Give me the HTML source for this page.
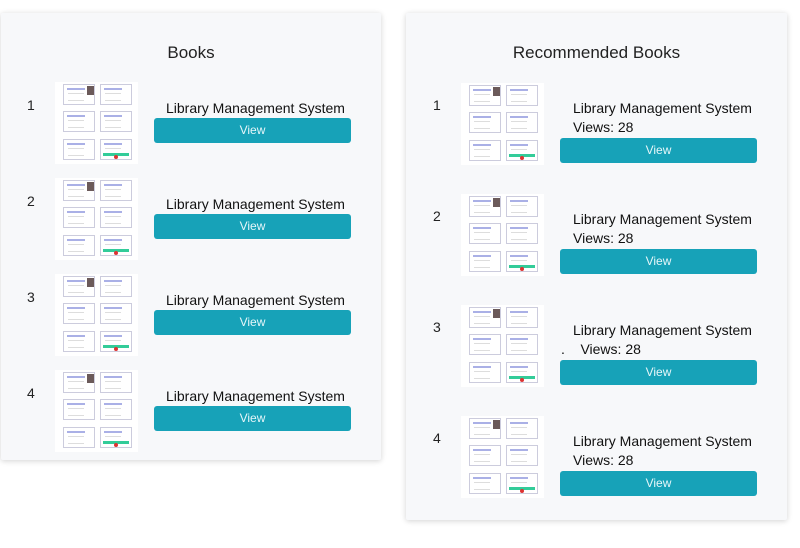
<!DOCTYPE html>
<html><head><meta charset="utf-8"><style>
body{margin:0;width:800px;height:548px;background:#fff;font-family:"Liberation Sans",Arial,sans-serif;position:relative;overflow:hidden;color:#222}
.card{position:absolute;background:#f7f8fa;box-shadow:0 1px 6px rgba(0,0,0,.18);border-radius:2px}
.h{position:absolute;left:0;right:0;text-align:center;font-size:17px;top:30px;color:#222}
.it{position:absolute;left:0;width:100%}
.n{position:absolute;font-size:14px}
.th{position:absolute;width:83px;height:82px;background:#fff}
.s{position:absolute;width:32px;height:21px;border:1px solid #ccd;background:#fff;box-sizing:border-box}
.s:before{content:"";position:absolute;left:3px;top:3px;width:18px;height:2px;background:#aab0e6}
.s:after{content:"";position:absolute;left:4px;top:8px;width:16px;height:6px;border-top:1px solid #ddd;border-bottom:1px solid #ddd}
.t{position:absolute;font-size:14px;white-space:nowrap;color:#111}
.b{position:absolute;width:197px;height:25px;background:#17a2b8;border-radius:3px;color:#e6f6f9;font-size:12px;text-align:center;line-height:25px}
</style></head><body>

<div class="card" style="left:1px;top:13px;width:380px;height:447px">
<div class="h">Books</div>
</div>
<div class="card" style="left:406px;top:13px;width:381px;height:507px">
<div class="h">Recommended Books</div>
</div>

<!-- left items -->
<div id="L"></div>
<div id="R"></div>
<script>
function thumb(x,y){var h='<div class="th" style="left:'+x+'px;top:'+y+'px">';
var cx=[8,45],cy=[2,29,57];
for(var r=0;r<3;r++)for(var c=0;c<2;c++){h+='<div class="s" style="left:'+cx[c]+'px;top:'+cy[r]+'px"></div>';}
h+='<div style="position:absolute;left:32px;top:4px;width:7px;height:9px;background:#6b5a5a"></div>';
h+='<div style="position:absolute;left:48px;top:71px;width:26px;height:3px;background:#3c9"></div>';
h+='<div style="position:absolute;left:59px;top:73px;width:4px;height:4px;background:#d33;border-radius:2px"></div>';
return h+'</div>';}
var L='';
for(var i=0;i<4;i++){var y=82+i*96;
L+='<div class="n" style="left:27px;top:'+(y+15)+'px">'+(i+1)+'</div>'+thumb(55,y)+
'<div class="t" style="left:166px;top:'+(y+18)+'px">Library Management System</div>'+
'<div class="b" style="left:154px;top:'+(y+36)+'px">View</div>';}
document.getElementById('L').innerHTML=L;
var R='';
for(var i=0;i<4;i++){var y=83+i*111;
R+='<div class="n" style="left:433px;top:'+(y+14)+'px">'+(i+1)+'</div>'+thumb(461,y)+
'<div class="t" style="left:573px;top:'+(y+17)+'px">Library Management System</div>'+
(i==2?'<div class="t" style="left:561px;top:'+(y+36)+'px">.&nbsp;&nbsp;&nbsp;&nbsp;Views: 28</div>':'<div class="t" style="left:573px;top:'+(y+36)+'px">Views: 28</div>')+
'<div class="b" style="left:560px;top:'+(y+55)+'px">View</div>';}
document.getElementById('R').innerHTML=R;
</script>
</body></html>
